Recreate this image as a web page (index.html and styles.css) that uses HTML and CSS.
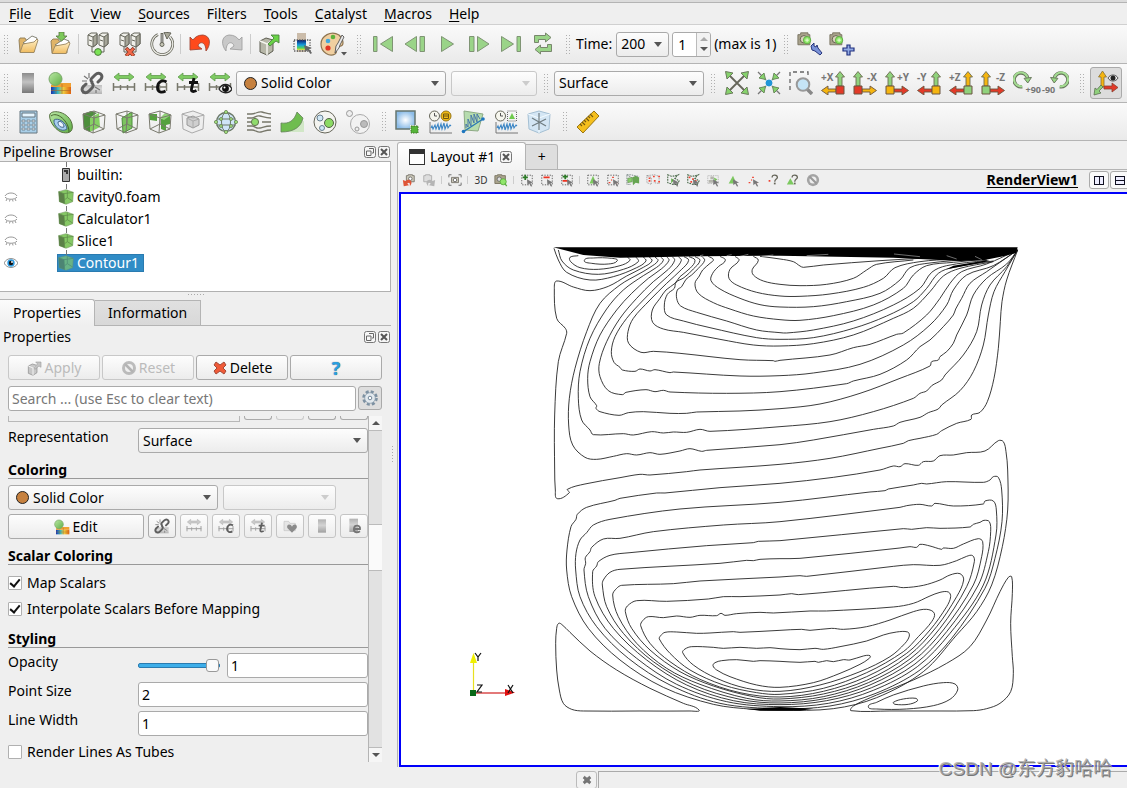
FILE: index.html
```html
<!DOCTYPE html>
<html lang="en">
<head>
<meta charset="utf-8">
<title>ParaView</title>
<link rel="stylesheet" href="styles.css">
</head>
<body>
<svg class="defs" aria-hidden="true">
  <defs>
    <linearGradient id="gGreen" x1="0" y1="0" x2="1" y2="1"><stop offset="0" stop-color="#b9e8a4"/><stop offset="1" stop-color="#5fae45"/></linearGradient>
    <linearGradient id="gGrey" x1="0" y1="0" x2="0" y2="1"><stop offset="0" stop-color="#8c8c8c"/><stop offset=".45" stop-color="#c2c2c2"/><stop offset="1" stop-color="#777"/></linearGradient>
    <linearGradient id="gRainbow"><stop offset="0" stop-color="#2030a8"/><stop offset=".3" stop-color="#20b0d0"/><stop offset=".6" stop-color="#f0d040"/><stop offset="1" stop-color="#e06010"/></linearGradient>
    <linearGradient id="gRainV" x1="0" y1="0" x2="0" y2="1"><stop offset="0" stop-color="#0a1a70"/><stop offset=".5" stop-color="#18a0e0"/><stop offset=".8" stop-color="#50d060"/><stop offset="1" stop-color="#f0e040"/></linearGradient>
    <radialGradient id="gBlue"><stop offset="0" stop-color="#fff"/><stop offset="1" stop-color="#8dbde8"/></radialGradient>
    <linearGradient id="gFolder" x1="0" y1="0" x2="0" y2="1"><stop offset="0" stop-color="#fff0c8"/><stop offset="1" stop-color="#f0bc60"/></linearGradient>
  </defs>
  <symbol id="folder" viewBox="0 0 24 24"><path d="M4 20 3 8l1-2h5l1 2 8 1v11z" fill="#e0b468" stroke="#8d7b55" stroke-width=".9"/><path d="m7 11 9-7 5 2-2 9z" fill="#fff" stroke="#77776a" stroke-width=".9"/><path d="M4 20.500 7 12l11-2 3-3 1 1-4 12.500z" fill="url(#gFolder)" stroke="#9a8660" stroke-width=".9"/></symbol>
  <symbol id="foldersave" viewBox="0 0 24 24"><path d="m4 21-1-12 2-2h5l1 2 8 1v11z" fill="#e0b468" stroke="#8d7b55" stroke-width=".9"/><path d="m7 13 9-6 5 2-2 7z" fill="#fff" stroke="#77776a" stroke-width=".9"/><path d="M4 21.500 7 14l11-2 3-2 1 1-4 10.500z" fill="url(#gFolder)" stroke="#9a8660" stroke-width=".9"/><path d="M11 0h5v4h3l-5.500 5L8 4h3z" fill="#7cc95a" stroke="#55753f" stroke-width=".8"/></symbol>
  <symbol id="servers" viewBox="0 0 24 24"><g stroke="#65655a" stroke-width="1"><path d="m2 3 3-2h6v11l-4 3-5-2z" fill="#f0f0ea"/><path d="m7 5 4-3v10l-4 3z" fill="#a5a598"/><path d="m13 3 3-2h6v11l-4 3-5-2z" fill="#f0f0ea"/><path d="m18 5 4-3v10l-4 3z" fill="#a5a598"/><path d="m2 3 5 2m6-2 5 2M3 8l3 1M14 8l3 1M6 15v5h12v-5" fill="none"/></g></symbol>
  <symbol id="connect" viewBox="0 0 24 24"><use href="#servers"/><circle cx="12" cy="20" r="3.400" fill="#7be356" stroke="#4d7a3c"/></symbol>
  <symbol id="disconnect" viewBox="0 0 24 24"><use href="#servers"/><path d="m8 16 8 8m0-8-8 8" stroke="#863520" stroke-width="3.600"/><path d="m8.500 16.500 7 7m0-7-7 7" stroke="#f4694a" stroke-width="2.200"/></symbol>
  <symbol id="timer" viewBox="0 0 24 24"><path d="M8 2.500A10.500 10.500 0 1 0 20 5M12 1v10" fill="none" stroke="#66665a" stroke-width="2.800"/><path d="M8 2.500A10.500 10.500 0 1 0 20 5" fill="none" stroke="#eeeee8" stroke-width="1.200"/><path d="m14 0 7 1-4 6z" fill="#aaa99a" stroke="#66665a"/><path d="M12 2v10" stroke="#aaa" stroke-width="1.200"/><circle cx="12" cy="12.500" r="2" fill="#c8c8b8" stroke="#66665a"/></symbol>
  <symbol id="undo" viewBox="0 0 24 24"><path d="M2 5v13l12-1-4-3c1-5 8-5 8 5 5-6 5-15-3-16-5 0-8 2-10 5z" fill="#ff4a1c" stroke="#a04838" stroke-width=".9"/></symbol>
  <symbol id="redo" viewBox="0 0 24 24"><path d="M22 5v13l-12-1 4-3c-1-5-8-5-8 5C1 13 1 4 9 3c5 0 8 2 10 5z" fill="#c9c9c9" stroke="#a0a0a0" stroke-width=".9"/></symbol>
  <symbol id="cube" viewBox="0 0 24 24"><path d="m1 4 11-3 11 4-1 14-10 4-10-4z" fill="#86c865" stroke="#6f8f5a" stroke-width=".8"/><path d="m1 4 8 3 1 15-8-3z" fill="#5c8048"/><path d="m1 4 8 3 14-2M9 7l1 15M14 2v11l8 5m-8-5-4 3" fill="none" stroke="#5f8a48" stroke-width="1.100"/></symbol>
  <symbol id="extract" viewBox="0 0 24 24"><path d="m2 9 6-3 7 2v11l-6 4-7-3z" fill="#b7b7a8" stroke="#5c5c50"/><path d="m2 9 7 3 6-4M9 12v11" fill="none" stroke="#f5f5ee" stroke-width="1.500"/><path d="m10 12 6-6-3-3h8v8l-3-2-6 5z" fill="#69d247" stroke="#4d8440" stroke-width=".9"/></symbol>
  <symbol id="selcolor" viewBox="0 0 24 24"><path d="M7 1h9v7H7z" fill="#cbbcaa"/><path d="M7 8h9v10H7z" fill="url(#gRainV)"/><path d="M7 18h9v2H7z" fill="#cbbcaa"/><path d="M4 8h16v11H4z" fill="none" stroke="#555" stroke-width="1.300" stroke-dasharray="1.300 1.300"/><path d="m14 13 8 3-3 1 3 4-1.500 1-3-4-2 2z" fill="#666"/></symbol>
  <symbol id="palette" viewBox="0 0 28 24"><path d="M19 3C11-2 1 4 1 12c0 9 9 13 14 10 4-3-1-5 2-7 3-1 6 0 6-4 0-3-2-6-4-8z" fill="#f0cfa0" stroke="#8d7450" stroke-width="1.200"/><circle cx="8" cy="9" r="2.300" fill="#41a8dc"/><circle cx="13" cy="5" r="2.300" fill="#5db33c"/><circle cx="8" cy="16" r="2.600" fill="#e23524"/><path d="m22 3-4 8-2 3-1 7 4-5 1-3 4-8z" fill="#e8e8e8" stroke="#555" stroke-width=".9"/><path d="M21 20h6l-3 3.500z" fill="#555"/></symbol>
  <symbol id="vfirst" viewBox="0 0 24 24"><g fill="#9ad488" stroke="#7f9474"><path d="M2.500 4.500h3.500v15H2.500zM21.500 4.500v15L9.500 12z"/></g></symbol>
  <symbol id="vprev" viewBox="0 0 24 24"><g fill="#9ad488" stroke="#7f9474"><path d="M17 4.500h4.500v15H17zM13.500 4.500v15L2 12z"/></g></symbol>
  <symbol id="vplay" viewBox="0 0 24 24"><path d="M6.500 4.500v15L18.500 12z" fill="#9ad488" stroke="#7f9474"/></symbol>
  <symbol id="vnext" viewBox="0 0 24 24"><g fill="#9ad488" stroke="#7f9474"><path d="M2.500 4.500H7v15H2.500zM10.500 4.500v15L22 12z"/></g></symbol>
  <symbol id="vlast" viewBox="0 0 24 24"><g fill="#9ad488" stroke="#7f9474"><path d="M18 4.500h3.500v15H18zM2.500 4.500v15L14.500 12z"/></g></symbol>
  <symbol id="loop" viewBox="0 0 24 24"><g fill="#9ad488" stroke="#78876c"><path d="M3.500 10.500v-7h11V1l5.500 4.500L14.500 10V7.500h-7v3zM20.500 12.500v7h-11V22L4 17.500 9.500 13v2.500h7v-3z"/></g></symbol>
  <symbol id="camera" viewBox="0 0 24 24"><path d="M1 4h3V2h8v2h2v11H1z" fill="#a9a38c" stroke="#76715e"/><circle cx="7.500" cy="9" r="4" fill="#d8d2bc" stroke="#5e5a4a"/><circle cx="11" cy="10" r="4" fill="#90e66a" stroke="#5aac3e"/><path d="M9 10h4m-2-2v4" stroke="#eaffdc"/></symbol>
  <symbol id="camcfg" viewBox="0 0 26 26"><use href="#camera" width="22" height="22"/><path d="m14 15 3-3v3l2 1 1-2 1 3 4 5-2 2-5-4-3-1z" fill="#7a92d8" stroke="#27357c"/></symbol>
  <symbol id="camadd" viewBox="0 0 26 26"><use href="#camera" width="22" height="22"/><path d="M18 14h3v3h4v3h-4v4h-3v-4h-4v-3h4z" fill="#93abe4" stroke="#213080" stroke-width="1.200"/></symbol>
  <symbol id="bar" viewBox="0 0 24 24"><path d="M6 2h12v20H6z" fill="url(#gGrey)"/></symbol>
  <symbol id="colormap" viewBox="0 0 24 24"><path d="M3 16h20v7H3z" fill="url(#gRainbow)"/><path d="M23 12v4H3v-2l9-2z" fill="#f0a030"/><path d="M3 19.500h20M8 16v7m6-10v10" stroke="#a86a28" stroke-width=".6"/><circle cx="7.500" cy="8" r="6.500" fill="url(#gGreen)" stroke="#7aa86a"/></symbol>
  <symbol id="chain" viewBox="0 0 24 24"><path d="M2 14h20v9H2z" fill="url(#gGrey)" opacity=".5"/><g fill="none" stroke="#5e5e5e" stroke-width="3" stroke-linecap="round"><path d="M6 13l-3 3c-3 4 2 8 6 4l3-3c2-2 1-4 0-5M18 11l3-3c3-4-2-8-6-4l-3 3c-2 2-1 3 0 4"/></g><path d="m4 5 4 3M9 2v5M2 10h5m8 6 5 3m-4 0v3" stroke="#777" stroke-width="1.200"/></symbol>
  <symbol id="range" viewBox="0 0 24 24"><path d="M1 16h22M1.500 12v8M8.500 14v5M15.500 14v5M22.500 12v8" stroke="#77776b" stroke-width="1.500" fill="none"/><path d="m2 6 5-4v2.500h10V2l5 4-5 4V7.500H7V10z" fill="#7ecb62" stroke="#5f9a4c" stroke-width=".8"/></symbol>
  <symbol id="ranc" viewBox="0 0 24 24"><use href="#range"/><path d="M22.500 11c-5-3-9 1-9 5.500 0 5 4.500 5.500 8 3.500" fill="none" stroke="#111" stroke-width="2.800"/></symbol>
  <symbol id="rant" viewBox="0 0 24 24"><use href="#range"/><path d="m18 7-2.500 11c-.5 3 2 3 5 1.500M13 11.500h9" fill="none" stroke="#111" stroke-width="2.800"/></symbol>
  <symbol id="ranv" viewBox="0 0 24 24"><use href="#range"/><path d="M11 18c3-6 10-6 13 0-3 5-10 5-13 0z" fill="#eee" stroke="#222" stroke-width="1.300"/><circle cx="17.500" cy="17.500" r="3.400" fill="#111"/><circle cx="16.500" cy="16.500" r="1" fill="#fff"/></symbol>
  <symbol id="reset" viewBox="0 0 24 24"><path d="m4 4 16 16m0-16L4 20" stroke="#66665a" stroke-width="1.800"/><g fill="#86d26c" stroke="#6a7b5c"><path d="M.5.5 8 2 2 8zM23.500.5 22 8l-6-6zM.5 23.500 2 16l6 6zM23.500 23.500 16 22l6-6z"/></g></symbol>
  <symbol id="resetd" viewBox="0 0 24 24"><path d="m1 1 22 22m0-22L1 23" stroke="#777" stroke-width="1.300"/><g fill="#86d26c" stroke="#6a8a5c"><path d="M8.500 8.500 2 7l5-5zM15.500 8.500 17 2l5 5zM8.500 15.500 7 22l-5-5zM15.500 15.500 22 17l-5 5z"/></g><circle cx="12" cy="12" r="4" fill="#2196d8" stroke="#eee"/></symbol>
  <symbol id="zoombox" viewBox="0 0 24 24"><path d="M1 19V1h18v6" fill="none" stroke="#666" stroke-width="1.300" stroke-dasharray="4 3"/><path d="m18 18 5 5" stroke="#888" stroke-width="3.500"/><circle cx="14" cy="13.500" r="6.300" fill="#c5e4f6" stroke="#999" stroke-width="2"/></symbol>
  <symbol id="axisl" viewBox="0 0 24 24"><path d="M17 15V6h-2.500L19 .5 23.500 6H21v9z" fill="var(--up)" stroke="#6b6b50" stroke-width=".9"/><path d="M15 18H7v-3L.5 19.500 7 24v-3h8z" fill="var(--side)" stroke="#6b5540" stroke-width=".9"/><path d="M15 15h8v8h-8z" fill="var(--box)" stroke="#6b5540"/></symbol>
  <symbol id="axisr" viewBox="0 0 24 24"><path d="M3 15V6H.5L5 .5 9.500 6H7v9z" fill="var(--up)" stroke="#6b6b50" stroke-width=".9"/><path d="M9 18h8v-3l6.500 4.500L17 24v-3H9z" fill="var(--side)" stroke="#6b5540" stroke-width=".9"/><path d="M1 15h8v8H1z" fill="var(--box)" stroke="#6b5540"/></symbol>
  <symbol id="rot" viewBox="0 0 26 26"><path d="M10 17A7.500 7.500 0 1 1 16 8" fill="none" stroke="#66745a" stroke-width="3.800"/><path d="M10 16.500A7.500 7.500 0 1 1 16 8" fill="none" stroke="#a4dc92" stroke-width="2.200"/><path d="m12 8 8-1-4 6z" fill="#98d884" stroke="#66745a"/></symbol>
  <symbol id="axes" viewBox="0 0 26 26"><path d="M8 17V7H5.500L9.500 1l4 6H11v10z" fill="#f5b510" stroke="#887030" stroke-width=".8"/><path d="M11 16h8v-3l6 4.500-6 4.500v-3h-8z" fill="#e23a28" stroke="#8a4030" stroke-width=".8"/><path d="m8 15 2 2-4 4 2 2-7 2 1-7 2 1.500z" fill="#8fd07c" stroke="#5a7050" stroke-width=".8"/><path d="M15 8c2-4 8-4 10 0-2 4-8 4-10 0z" fill="#eee" stroke="#555"/><circle cx="20" cy="8" r="2.500" fill="#222"/></symbol>
  <symbol id="calc" viewBox="0 0 24 24"><path d="M4 1h17v22H4z" fill="#a9cfe8" stroke="#667680"/><path d="M6 3h13v4H6z" fill="#e5f5ff" stroke="#667680"/><g fill="#e9f1f6" stroke="#6c7c86" stroke-width=".8"><path d="M6 10h3v2H6zM11 10h3v2h-3zM16 10h3v2h-3zM6 14h3v2H6zM11 14h3v2h-3zM16 14h3v2h-3zM6 18h3v2H6zM11 18h3v2h-3zM16 18h3v2h-3z"/></g></symbol>
  <symbol id="contour" viewBox="0 0 24 24"><path d="M1 4c3-5 19-2 22 10 2 9-5 10-11 8C5 19-1 9 1 4z" fill="url(#gGreen)" stroke="#55703e"/><path d="M2 6c6-5 18 5 18 16" fill="none" stroke="#48632f"/><path d="M5 10c4-3 13 3 13 9-5 4-14-2-13-9z" fill="#a6cdf0" stroke="#41678a"/><path d="M9 12c3-2 6 2 6 5-3 1-6-1-6-5z" fill="#ecf5ff" stroke="#41678a"/></symbol>
  <symbol id="wire" viewBox="0 0 24 24"><path d="m1 4 11-3 11 4-1 14-11 4-9-4zM1 4l11 4 11-3M12 8l-1 15M12 1v13L2 19m10-5 10 5" fill="none" stroke="#7a7a6e" stroke-width="1"/></symbol>
  <symbol id="clip" viewBox="0 0 24 24"><path d="m1 4 8-3 6 2-6 4-1 15-6-3z" fill="#4d8f3c"/><path d="m8 8 9-5 1 14-10 5z" fill="#86d163"/><use href="#wire"/></symbol>
  <symbol id="slice" viewBox="0 0 24 24"><path d="m7 8 10-6v16l-9 5z" fill="#7cc45f" stroke="#4d8f3c"/><use href="#wire"/></symbol>
  <symbol id="thresh" viewBox="0 0 24 24"><path d="M1 4h8v7l-7-1zM13 9l9-4v9l-4 1v6l-5-2z" fill="#55a23e"/><path d="m12 8 5-5 6 2-7 5z" fill="#90d477"/><use href="#wire"/></symbol>
  <symbol id="subset" viewBox="0 0 24 24"><path d="m1 4 11-3 11 4-1 14-11 4-9-4z" fill="#eee"/><path d="m6 8 6-2 6 3v6l-6 3-6-3z" fill="#cfcfcf" stroke="#999"/><path d="m6 8 6 3 6-2m-6 2v7M1 4l11 4 11-3M1 4l1 15 9 4 11-4 1-14-11-4z" fill="none" stroke="#aaa"/></symbol>
  <symbol id="glyph" viewBox="0 0 24 24"><circle cx="12" cy="12" r="9.500" fill="#cfe5f7" stroke="#6a7766" stroke-width="1.300"/><ellipse cx="12" cy="12" rx="4.500" ry="9.500" fill="none" stroke="#6a7766"/><path d="M3 9h18M2.500 15h19" stroke="#6a7766"/><g fill="#a3e17c" stroke="#668355" stroke-width=".8"><circle cx="12" cy="2" r="1.600"/><circle cx="2" cy="12" r="1.600"/><circle cx="22" cy="12" r="1.600"/><circle cx="12" cy="22" r="1.600"/><circle cx="7" cy="9" r="1.500"/><circle cx="17" cy="9" r="1.500"/><circle cx="7" cy="16" r="1.500"/><circle cx="17" cy="16" r="1.500"/></g></symbol>
  <symbol id="stream" viewBox="0 0 24 24"><path d="M0 4h4c5 0 7-3 11-2s5 2 9 2M0 8h5c3 0 4-3 8-2s6 2 11 2M0 16h5c3 0 4 3 8 2s6-2 11-2M0 20h5c4 0 5 3 9 2s5-2 10-2M15 12h9M0 12h4" fill="none" stroke="#77776a" stroke-width="1.300"/><circle cx="8" cy="12" r="3.600" fill="#8fdb6c" stroke="#62754f"/></symbol>
  <symbol id="warp" viewBox="0 0 24 24"><path d="m12 14 12-3v11H2z" fill="#d1e7c7"/><path d="M1 13c8 1 13-2 16-11l6 6c-2 9-9 14-22 14z" fill="#6fbd4f" stroke="#64805a" stroke-width=".8"/></symbol>
  <symbol id="group" viewBox="0 0 24 24"><circle cx="12" cy="12" r="11" fill="#f4f4f0" stroke="#66665a"/><circle cx="7" cy="8" r="3" fill="#cfe7f5" stroke="#6a8090"/><circle cx="16" cy="13" r="4.500" fill="#8bda63" stroke="#526345"/><circle cx="9" cy="18" r="2.500" fill="#cfe7f5" stroke="#6a8090"/></symbol>
  <symbol id="ungroup" viewBox="0 0 24 24"><circle cx="14" cy="14" r="9.500" fill="#f2f2f2" stroke="#aaa"/><circle cx="3.500" cy="3.500" r="3" fill="#eee" stroke="#999"/><circle cx="18" cy="14" r="3.500" fill="#bbb" stroke="#999"/><circle cx="11" cy="19" r="2" fill="#eee" stroke="#999"/></symbol>
  <symbol id="extractsel" viewBox="0 0 24 24"><path d="M1 1h19v18H1z" fill="url(#gBlue)" stroke="#66766f" stroke-width="1.500"/><path d="M15 15h9v9h-9z" fill="#eee"/><path d="M16 16h7v7h-7z" fill="#56b53a" stroke="#3c7428" stroke-dasharray="1.500 1"/></symbol>
  <symbol id="wave" viewBox="0 0 24 24"><path d="M2 12v11h22" fill="none" stroke="#777"/><path d="m3 18 1-2 1 3 2-4 1 4 2-5 1 6 2-6 1 5 2-6 1 6 2-5 1 4 2-3 1 1" fill="none" stroke="#3984c4" stroke-width="1.100"/></symbol>
  <symbol id="plott" viewBox="0 0 24 24"><use href="#wave"/><circle cx="6.500" cy="6" r="5" fill="#f6f6ee" stroke="#66665a"/><path d="M6.500 3v3H9" fill="none" stroke="#555"/><circle cx="18" cy="6" r="5" fill="#f1bb14" stroke="#977515"/><path d="M15.500 4h5v4.500h-5zm0 2h5" fill="none" stroke="#715610"/></symbol>
  <symbol id="plotl" viewBox="0 0 24 24"><path d="m3 1 19 3-5 17-13-1z" fill="#b6dcae" stroke="#8eaa85"/><path d="m2 22 20-13" stroke="#2877b5" stroke-width="1.300"/><path d="m5 18 0-4 2 3V9l3 7V5l3 8V4l3 8V4l3 5" fill="none" stroke="#4877a8"/><circle cx="2.500" cy="21.500" r="1.800" fill="#1e77bf"/><circle cx="22" cy="9" r="1.800" fill="#1e77bf"/></symbol>
  <symbol id="plots" viewBox="0 0 24 24"><use href="#wave"/><circle cx="6.500" cy="6" r="5" fill="#f6f6ee" stroke="#66665a"/><path d="M6.500 3v3H9" fill="none" stroke="#555"/><path d="M13.500 1h9v10h-9z" fill="none" stroke="#666" stroke-dasharray="1 1"/><path d="m18 3 3 6h-6z" fill="#6fca4e"/></symbol>
  <symbol id="probe" viewBox="0 0 24 24"><path d="m1 4 11-3 11 3-1 15-10 4-10-4z" fill="#d4e6f4" stroke="#a4bfd3"/><path d="m1 4 11 4 11-4M12 8v15" fill="none" stroke="#f3fbff"/><path d="M12 3v17M5 8l14 8M5 16l14-7" stroke="#6f7c80" stroke-width="1.200"/></symbol>
  <symbol id="ruler" viewBox="0 0 24 24"><path d="M1 17 18 1l5 5L7 23z" fill="#f5bf1d" stroke="#9a7510"/><path d="m4 14 2 2m0-4 3 3m-1-5 2 2m0-4 3 3m-1-5 2 2m0-4 3 3" stroke="#765a10" stroke-width="1.100"/></symbol>
  <symbol id="restore" viewBox="0 0 12 12"><rect x=".5" y=".5" width="11" height="11" rx="2" fill="#f6f6f6" stroke="#777"/><path d="M5 2.500h4.500V7H8M2.500 5H7v4.500H2.500z" fill="none" stroke="#666"/></symbol>
  <symbol id="close" viewBox="0 0 12 12"><rect x=".5" y=".5" width="11" height="11" rx="2" fill="#f6f6f6" stroke="#777"/><path d="m3 3 6 6m0-6L3 9" stroke="#555" stroke-width="2"/></symbol>
  <symbol id="server" viewBox="0 0 16 16"><path d="M4.500 1.500h7v13h-7z" fill="#aaa" stroke="#333"/><path d="M6 4h4M8 6h2" stroke="#111" stroke-width="1.500"/></symbol>
  <symbol id="shut" viewBox="0 0 14 10"><path d="M1 4c2-4 10-4 12 0M1 5c2 3 10 3 12 0M3 7 2 9m4-1.500L5.500 9.500M8.500 7.500l.5 2M11 7l1 2" fill="none" stroke="#999"/></symbol>
  <symbol id="eye" viewBox="0 0 14 10"><path d="M0 5c3-6 11-6 14 0-3 6-11 6-14 0z" fill="#fff" stroke="#777" stroke-width=".8"/><circle cx="7" cy="5" r="3.700" fill="#2d9be0"/><circle cx="7" cy="5" r="2.200" fill="#111"/><circle cx="8" cy="4" r=".9" fill="#fff"/></symbol>
  <symbol id="no" viewBox="0 0 16 16"><circle cx="8" cy="8" r="7" fill="#a4a4a4"/><circle cx="8" cy="8" r="4" fill="#eee"/><path d="m4 4 8 8" stroke="#999" stroke-width="2.500"/></symbol>
  <symbol id="cross" viewBox="0 0 16 16"><path d="m4 2 4 3 4-3 2 3-3 3 3 3-2 3-4-3-4 3-2-3 3-3-3-3z" fill="#f05a38" stroke="#a24a38"/></symbol>
  <symbol id="gear" viewBox="0 0 16 16"><circle cx="8" cy="8" r="6.300" fill="none" stroke="#7d91a2" stroke-width="3" stroke-dasharray="2.900 2.040"/><circle cx="8" cy="8" r="5.300" fill="#e2e9ee" stroke="#8297a8" stroke-width=".7"/><circle cx="8" cy="8" r="1.800" fill="#fff" stroke="#72879a"/></symbol>
  <symbol id="heart" viewBox="0 0 24 24"><path d="M3 19V5h7l2 3h8v11z" fill="#ddd" stroke="#aaa"/><path d="m15 22-7-7c-2-6 5-7 7-2 2-5 9-4 7 2z" fill="#555"/></symbol>
  <symbol id="bare" viewBox="0 0 24 24"><path d="M5 1h13v20H5z" fill="url(#gGrey)"/><path d="M12 16.500h9c1-6-8-7-9-1-1 7 5 7 9 4.500" fill="none" stroke="#333" stroke-width="2.800"/></symbol>
  <symbol id="cam" viewBox="0 0 16 16"><path d="M5 3h2V2h5v1h2v7H5z" fill="#ccc9ba" stroke="#77736a"/><circle cx="9.500" cy="6.500" r="2" fill="#fff" stroke="#666"/></symbol>
  <symbol id="camundo" viewBox="0 0 16 16"><use href="#cam"/><path d="m1 8 1 7 6-1-2-2c3-2 3 0 3 3 4-4 1-8-3-7L4 9z" fill="#df5537"/></symbol>
  <symbol id="camredo" viewBox="0 0 16 16"><path d="M2 3h2V2h5v1h2v7H2z" fill="#ddd" stroke="#aaa"/><path d="m15 8-1 7-6-1 2-2c-3-2-3 0-3 3-4-4-1-8 3-7l2 1z" fill="#b5b5b5"/></symbol>
  <symbol id="camshot" viewBox="0 0 16 16"><path d="M1 5V2h3m8 0h3v3m0 6v3h-3m-8 0H1v-3" fill="none" stroke="#666"/><path d="M4 5h8v6H4z" fill="#ccc9ba" stroke="#77736a"/><circle cx="8" cy="8" r="2" fill="#fff" stroke="#666"/></symbol>
  <symbol id="camzoom" viewBox="0 0 16 16"><path d="M1 3h3V2h5v1h4v9H1z" fill="#a9a38c" stroke="#76715e"/><circle cx="6" cy="7" r="2.500" fill="#ddd" stroke="#666"/><circle cx="10.500" cy="10" r="3.500" fill="#90e66a" stroke="#5aac3e"/><path d="m12.500 12 2 3" stroke="#5aac3e" stroke-width="1.500"/></symbol>
  <symbol id="dots" viewBox="0 0 16 16"><path d="M2 2.500h12v11H2z" fill="none" stroke="#555" stroke-dasharray="1.500 1.500"/></symbol>
  <symbol id="ptr" viewBox="0 0 16 16"><path d="m8 7 7 4-3 .5 2 3.500-1.500.5-2-3.500-2 2z" fill="#777"/></symbol>
  <symbol id="sadd" viewBox="0 0 16 16"><use href="#dots"/><path d="M3 5h6M6 2v6" stroke="#2b7a25" stroke-width="2"/><use href="#ptr"/></symbol>
  <symbol id="ssub" viewBox="0 0 16 16"><use href="#dots"/><path d="M4 5h7" stroke="#e32" stroke-width="2"/><use href="#ptr"/></symbol>
  <symbol id="stog" viewBox="0 0 16 16"><use href="#dots"/><path d="M3 4h6M6 2v5" stroke="#2b7a25" stroke-width="2"/><path d="M3 9h7" stroke="#e32" stroke-width="2"/><use href="#ptr"/></symbol>
  <symbol id="stri" viewBox="0 0 16 16"><use href="#dots"/><path d="m8 3 4 9H4z" fill="#7cc95f"/><use href="#ptr"/></symbol>
  <symbol id="rpt" viewBox="0 0 16 16"><path d="M3 11h2M7 5h2M11 11h2M6 8h1" stroke="#e43" stroke-width="1.600"/></symbol>
  <symbol id="spt" viewBox="0 0 16 16"><use href="#dots"/><use href="#rpt"/><use href="#ptr"/></symbol>
  <symbol id="fcell" viewBox="0 0 16 16"><path d="m7 5 4-2 4 2v7l-4-1-3 3z" fill="#67a552"/><path d="M1 2h4m0 11H1V2l5 3M5 2l10 2" fill="none" stroke="#566" stroke-dasharray="1 1"/><path d="m2 6 5-1v5l-5 1z" fill="#88cf6b" stroke="#587a4a" stroke-width=".6"/></symbol>
  <symbol id="fpt" viewBox="0 0 16 16"><path d="m1 3 5 2v8l-5-2zM1 3l9-1 5 2v8l-6-1" fill="none" stroke="#888" stroke-dasharray="1 1"/><path d="M3 6h2m3-2h2M3 9h2m4 0h2m3-5h2m-2 6h2" stroke="#e43" stroke-width="1.800"/></symbol>
  <symbol id="poly" viewBox="0 0 16 16"><path d="m2 2 5 2 7-2-4 4 5 3-2 4-5 0-6-2z" fill="none" stroke="#456545" stroke-width="1.200" stroke-dasharray="2 1"/></symbol>
  <symbol id="pcell" viewBox="0 0 16 16"><use href="#poly"/><path d="m6 6 3 2-3 4z" fill="#59a841"/><use href="#ptr"/></symbol>
  <symbol id="ppt" viewBox="0 0 16 16"><use href="#poly"/><path d="M3 5h2m2 2h2M5 10h2m3-1h2" stroke="#e43" stroke-width="2"/><use href="#ptr"/></symbol>
  <symbol id="block" viewBox="0 0 16 16"><path d="M2 3h12v9H2z" fill="none" stroke="#aaa" stroke-dasharray="1 1"/><path d="M3 8h5v3H3zM5 4h4v3H5z" fill="#b4b4ac"/><path d="m9 5 4 2-3 3z" fill="#7bc35f"/><use href="#ptr"/></symbol>
  <symbol id="itri" viewBox="0 0 16 16"><path d="m8 3 4 9H3z" fill="#7cc95f"/><use href="#ptr"/></symbol>
  <symbol id="ipt" viewBox="0 0 16 16"><use href="#rpt"/><use href="#ptr"/></symbol>
  <symbol id="quest" viewBox="0 0 16 16"><path d="M7 5c0-4 6-3 6 0 0 2-3 2-3 5" fill="none" stroke="#66665a" stroke-width="1.500"/><path d="M9 12h2" stroke="#66665a" stroke-width="2"/></symbol>
  <symbol id="qpt" viewBox="0 0 16 16"><use href="#quest"/><path d="M3 9h2" stroke="#e43" stroke-width="2"/></symbol>
  <symbol id="qtri" viewBox="0 0 16 16"><use href="#quest"/><path d="m5 6 4 7H1z" fill="#7cc95f"/></symbol>
</svg>

<div class="app">
  <nav class="menubar">
    <button><u>F</u>ile</button><button><u>E</u>dit</button><button><u>V</u>iew</button><button><u>S</u>ources</button><button>Fi<u>l</u>ters</button><button><u>T</u>ools</button><button><u>C</u>atalyst</button><button><u>M</u>acros</button><button><u>H</u>elp</button>
  </nav>

  <div class="toolbar">
    <span class="grip first"></span>
    <button class="tb" aria-label="Open"><svg><use href="#folder"/></svg></button>
    <button class="tb" aria-label="Save Data"><svg><use href="#foldersave"/></svg></button>
    <span class="sep"></span>
    <button class="tb" aria-label="Connect"><svg><use href="#connect"/></svg></button>
    <button class="tb" aria-label="Disconnect"><svg><use href="#disconnect"/></svg></button>
    <button class="tb" aria-label="Auto Apply"><svg><use href="#timer"/></svg></button>
    <span class="sep"></span>
    <button class="tb" aria-label="Undo"><svg><use href="#undo"/></svg></button>
    <button class="tb" aria-label="Redo" disabled><svg><use href="#redo"/></svg></button>
    <span class="sep"></span>
    <button class="tb" aria-label="Extract"><svg><use href="#extract"/></svg></button>
    <button class="tb" aria-label="Find Data"><svg><use href="#selcolor"/></svg></button>
    <button class="tb" aria-label="Load Palette"><svg class="wide"><use href="#palette"/></svg></button>
    <span class="grip"></span>
    <button class="tb" aria-label="First Frame"><svg><use href="#vfirst"/></svg></button>
    <button class="tb" aria-label="Previous Frame"><svg><use href="#vprev"/></svg></button>
    <button class="tb" aria-label="Play"><svg><use href="#vplay"/></svg></button>
    <button class="tb" aria-label="Next Frame"><svg><use href="#vnext"/></svg></button>
    <button class="tb" aria-label="Last Frame"><svg><use href="#vlast"/></svg></button>
    <button class="tb" aria-label="Loop"><svg><use href="#loop"/></svg></button>
    <span class="grip"></span>
    <label class="time" for="time">Time:</label>
    <span class="combo w-time"><select id="time"><option>200</option></select></span>
    <span class="spin"><input aria-label="Time step" type="text" value="1"><span class="arrows"><i class="up"></i><i class="down"></i></span></span>
    <span class="max">(max is 1)</span>
    <span class="grip"></span>
    <button class="tb" aria-label="Configure Camera Link"><svg class="big"><use href="#camcfg"/></svg></button>
    <button class="tb" aria-label="Add Camera Link"><svg class="big"><use href="#camadd"/></svg></button>
  </div>

  <div class="toolbar">
    <span class="grip first"></span>
    <button class="tb" aria-label="Color Legend"><svg><use href="#bar"/></svg></button>
    <button class="tb" aria-label="Edit Color Map"><svg><use href="#colormap"/></svg></button>
    <button class="tb" aria-label="Separate Color Map"><svg><use href="#chain"/></svg></button>
    <button class="tb" aria-label="Rescale to Data Range"><svg><use href="#range"/></svg></button>
    <button class="tb" aria-label="Rescale to Custom Range"><svg><use href="#ranc"/></svg></button>
    <button class="tb" aria-label="Rescale over Time"><svg><use href="#rant"/></svg></button>
    <button class="tb" aria-label="Rescale to Visible"><svg><use href="#ranv"/></svg></button>
    <span class="combo dot w-color"><select aria-label="Color by"><option>Solid Color</option></select></span>
    <span class="combo off w-comp"><select aria-label="Component" disabled><option></option></select></span>
    <span class="grip"></span>
    <span class="combo w-rep"><select aria-label="Representation"><option>Surface</option></select></span>
    <span class="grip"></span>
    <button class="tb" aria-label="Reset"><svg><use href="#reset"/></svg></button>
    <button class="tb" aria-label="Zoom to Data"><svg><use href="#resetd"/></svg></button>
    <button class="tb" aria-label="Zoom to Box"><svg><use href="#zoombox"/></svg></button>
    <button class="tb ax px"><svg><use href="#axisl"/></svg><b>+X</b></button>
    <button class="tb ax px right"><svg><use href="#axisr"/></svg><b>-X</b></button>
    <button class="tb ax py right"><svg><use href="#axisr"/></svg><b>+Y</b></button>
    <button class="tb ax py"><svg><use href="#axisl"/></svg><b>-Y</b></button>
    <button class="tb ax pz"><svg><use href="#axisl"/></svg><b>+Z</b></button>
    <button class="tb ax pz right"><svg><use href="#axisr"/></svg><b>-Z</b></button>
    <button class="tb rot"><svg><use href="#rot"/></svg><b>+90</b></button>
    <button class="tb rot back"><svg><use href="#rot"/></svg><b>-90</b></button>
    <span class="grip"></span>
    <button class="tb pressed" aria-label="Show Orientation Axes"><svg class="big"><use href="#axes"/></svg></button>
  </div>

  <div class="toolbar filters">
    <span class="grip first"></span>
    <button class="tb" aria-label="Calculator"><svg><use href="#calc"/></svg></button>
    <button class="tb" aria-label="Contour"><svg><use href="#contour"/></svg></button>
    <button class="tb" aria-label="Clip"><svg><use href="#clip"/></svg></button>
    <button class="tb" aria-label="Slice"><svg><use href="#slice"/></svg></button>
    <button class="tb" aria-label="Threshold"><svg><use href="#thresh"/></svg></button>
    <button class="tb" aria-label="Extract Subset" disabled><svg><use href="#subset"/></svg></button>
    <button class="tb" aria-label="Glyph"><svg><use href="#glyph"/></svg></button>
    <button class="tb" aria-label="Stream Tracer"><svg><use href="#stream"/></svg></button>
    <button class="tb" aria-label="Warp"><svg><use href="#warp"/></svg></button>
    <button class="tb" aria-label="Group"><svg><use href="#group"/></svg></button>
    <button class="tb" aria-label="Extract Group" disabled><svg><use href="#ungroup"/></svg></button>
    <span class="grip"></span>
    <button class="tb" aria-label="Extract Selection"><svg><use href="#extractsel"/></svg></button>
    <button class="tb" aria-label="Plot Data over Time"><svg><use href="#plott"/></svg></button>
    <button class="tb" aria-label="Plot over Line"><svg><use href="#plotl"/></svg></button>
    <button class="tb" aria-label="Plot Selection over Time"><svg><use href="#plots"/></svg></button>
    <button class="tb" aria-label="Probe"><svg><use href="#probe"/></svg></button>
    <span class="grip"></span>
    <button class="tb" aria-label="Ruler"><svg><use href="#ruler"/></svg></button>
  </div>

  <main class="main">
    <aside class="dock">
      <header class="title">Pipeline Browser<span class="tools"><button aria-label="Float"><svg><use href="#restore"/></svg></button><button aria-label="Close"><svg><use href="#close"/></svg></button></span></header>
      <ul class="tree">
        <li><span class="vis"></span><span class="node"><svg><use href="#server"/></svg>builtin:</span></li>
        <li><span class="vis"><svg><use href="#shut"/></svg></span><span class="node"><svg><use href="#cube"/></svg>cavity0.foam</span></li>
        <li><span class="vis"><svg><use href="#shut"/></svg></span><span class="node"><svg><use href="#cube"/></svg>Calculator1</span></li>
        <li><span class="vis"><svg><use href="#shut"/></svg></span><span class="node"><svg><use href="#cube"/></svg>Slice1</span></li>
        <li><span class="vis"><svg><use href="#eye"/></svg></span><span class="node sel"><svg><use href="#cube"/></svg>Contour1</span></li>
      </ul>
      <div class="hsplit"></div>
      <div class="tabs"><button class="tab on">Properties</button><button class="tab">Information</button></div>
      <header class="title">Properties<span class="tools"><button aria-label="Float"><svg><use href="#restore"/></svg></button><button aria-label="Close"><svg><use href="#close"/></svg></button></span></header>
      <div class="actions">
        <button class="btn" disabled><svg class="gray"><use href="#extract"/></svg>Apply</button>
        <button class="btn" disabled><svg><use href="#no"/></svg>Reset</button>
        <button class="btn"><svg><use href="#cross"/></svg>Delete</button>
        <button class="btn help">?</button>
      </div>
      <div class="search"><input type="text" aria-label="Search" placeholder="Search ... (use Esc to clear text)"><button class="btn gear" aria-label="Advanced"><svg><use href="#gear"/></svg></button></div>
      <div class="scroller">
        <div class="props">
          <div class="cut"><i class="box"></i><i></i><i class="dim"></i><i></i><i></i></div>
          <div class="row"><label for="rep">Representation</label><span class="combo"><select id="rep"><option>Surface</option></select></span></div>
          <h3>Coloring</h3>
          <div class="pair"><span class="combo dot"><select aria-label="Coloring"><option>Solid Color</option></select></span><span class="combo off"><select aria-label="Coloring component" disabled><option></option></select></span></div>
          <div class="edit">
            <button class="btn"><svg><use href="#colormap"/></svg>Edit</button>
            <button class="btn sm" aria-label="Separate"><svg class="gray"><use href="#chain"/></svg></button>
            <button class="btn sm off" aria-label="Rescale"><svg><use href="#range"/></svg></button>
            <button class="btn sm off" aria-label="Rescale custom"><svg><use href="#ranc"/></svg></button>
            <button class="btn sm off" aria-label="Rescale time"><svg><use href="#rant"/></svg></button>
            <button class="btn sm off" aria-label="Presets"><svg><use href="#heart"/></svg></button>
            <button class="btn sm off" aria-label="Legend"><svg><use href="#bar"/></svg></button>
            <button class="btn sm off" aria-label="Edit legend"><svg><use href="#bare"/></svg></button>
          </div>
          <h3>Scalar Coloring</h3>
          <div class="checks">
            <label><input type="checkbox" checked>Map Scalars</label>
            <label><input type="checkbox" checked>Interpolate Scalars Before Mapping</label>
          </div>
          <h3>Styling</h3>
          <div class="fields">
            <div class="row"><label for="op">Opacity</label><span class="opac"><input type="range" aria-label="Opacity slider" value="100"><input id="op" type="text" value="1"></span></div>
            <div class="row"><label for="ps">Point Size</label><input id="ps" type="text" value="2"></div>
            <div class="row"><label for="lw">Line Width</label><input id="lw" type="text" value="1"></div>
          </div>
          <div class="checks last"><label><input type="checkbox">Render Lines As Tubes</label></div>
        </div>
        <div class="sbar"><span class="cap"><i class="up"></i></span><span class="track"></span><span class="thumb"></span><span class="track low"></span><span class="cap"><i class="down"></i></span></div>
      </div>
    </aside>
    <div class="vsplit"></div>
    <section class="views">
      <div class="ltabs"><button class="ltab on"><i class="win"></i>Layout #1<svg><use href="#close"/></svg></button><button class="ltab plus">+</button><span class="rest"></span></div>
      <div class="pane">
        <div class="vbar">
          <button aria-label="Camera Undo"><svg><use href="#camundo"/></svg></button><button aria-label="Camera Redo"><svg><use href="#camredo"/></svg></button><span class="sep"></span>
          <button aria-label="Capture"><svg><use href="#camshot"/></svg></button><span class="sep"></span>
          <button class="td">3D</button><button aria-label="Adjust Camera"><svg><use href="#camzoom"/></svg></button><span class="sep"></span>
          <button aria-label="Add selection"><svg><use href="#sadd"/></svg></button><button aria-label="Subtract selection"><svg><use href="#ssub"/></svg></button><button aria-label="Toggle selection"><svg><use href="#stog"/></svg></button><span class="sep"></span>
          <button aria-label="Select Cells On"><svg><use href="#stri"/></svg></button><button aria-label="Select Points On"><svg><use href="#spt"/></svg></button><button aria-label="Select Cells Through"><svg><use href="#fcell"/></svg></button><button aria-label="Select Points Through"><svg><use href="#fpt"/></svg></button><button aria-label="Polygon Cells"><svg><use href="#pcell"/></svg></button><button aria-label="Polygon Points"><svg><use href="#ppt"/></svg></button><button aria-label="Select Block"><svg><use href="#block"/></svg></button><button aria-label="Interactive Cells"><svg><use href="#itri"/></svg></button><button aria-label="Interactive Points"><svg><use href="#ipt"/></svg></button><button aria-label="Hover Points"><svg><use href="#qpt"/></svg></button><button aria-label="Hover Cells"><svg><use href="#qtri"/></svg></button><button aria-label="Clear Selection"><svg><use href="#no"/></svg></button>
          <span class="vname"><a href="#view">RenderView1</a></span>
          <button class="split" aria-label="Split Horizontal"><i class="h"></i></button><button class="split" aria-label="Split Vertical"><i class="v"></i></button>
        </div>
        <div class="canvas" id="view">
          <svg viewBox="0 0 726 571" preserveAspectRatio="xMinYMin meet">
            <g id="contours" transform="translate(139 41) scale(.33333)"></g>
            <g stroke-width="1.200">
              <path d="M72.500 499v-38" stroke="#e8e020"/><path d="m72.500 459-3.500 10h7z" fill="#f0f000"/>
              <path d="M75 499h32" stroke="#d02020"/><path d="m114 498.500-10-3.500v7z" fill="#e01010"/>
              <path d="M69 496h6v6h-6z" fill="#086818"/>
              <g fill="none" stroke="#111"><path d="m74 459 3 4 3-4m-3 4v4M76 491h5l-5 7h5M107 491l5 8m0-8-5 8"/></g>
            </g>
          </svg>
        </div>
      </div>
    </section>
  </main>
  <footer class="status"><button aria-label="Abort"><svg><use href="#cross"/></svg></button><span class="progress"></span></footer>
  <div class="mark">CSDN @东方豹哈哈</div>
</div>
<script src="contours.js"></script>
</body>
</html>
```
FILE: styles.css
```css
*, *::before, *::after { box-sizing: border-box; }
body { margin: 0; background: #efefef; color: #000; font: 14px/18px "Noto Sans", "Open Sans", sans-serif; }
button, input, select { font: inherit; color: inherit; margin: 0; }
button { border: 0; background: none; padding: 0; }
.defs { position: absolute; width: 0; height: 0; }
.app { position: relative; height: 100vh; min-height: 620px; display: flex; flex-direction: column; overflow: hidden; }

.menubar { height: 25px; border-top: 2px solid #dcdcdc; box-shadow: inset 0 1px #b4b4b4; border-bottom: 1px solid #d0d0d0; display: flex; align-items: center; gap: 17px; padding: 2px 9px 0; flex: none; }
.menubar u, .vname a { text-underline-offset: 2px; }

.toolbar { height: 39px; flex: none; display: flex; align-items: center; background: linear-gradient(#fafafa, #eaeaea); border-bottom: 1px solid #b4b4b4; white-space: nowrap; }
.grip { width: 17px; height: 19px; flex: none; padding: 0 5px 0 7px; background: linear-gradient(#bbb, #bbb) 0 0 / 1px 1px content-box; }
.grip { background: conic-gradient(from 270deg at 1px 1px, #b0b0b0 90deg, transparent 0) 0 0 / 3px 3px content-box content-box; }
.grip.first { width: 12px; padding: 0 3px 0 4px; }
.sep { width: 6px; height: 20px; flex: none; border-left: 1px solid #ccc; margin-left: 2px; margin-right: -2px; }
.tb { width: 32px; height: 32px; flex: none; display: grid; place-items: center; }
.tb svg { width: 24px; height: 24px; }
.tb svg.wide { width: 28px; }
.tb svg.big { width: 26px; height: 26px; }
.filters { height: 38px; }
.filters .tb { width: 33px; }
.filters .grip.first { width: 11px; padding: 0 2px 0 4px; }
.filters .grip { width: 16px; padding: 0 3px 0 8px; }
.tb.pressed { border: 1px solid #aaa; border-radius: 3px; background: #dcdcdc; }
.ax, .rot { position: relative; }
.tb b { position: absolute; left: 4px; top: 3px; font-size: 10px; line-height: 14px; color: #777; }
.tb.right b { left: auto; right: 4px; }
.px { --up: #90d27c; --side: #f5b510; --box: #e23a28; }
.py { --up: #90d27c; --side: #e23a28; --box: #f5b510; }
.pz { --up: #f5b510; --side: #e23a28; --box: #90d27c; }
.tb.rot b { left: auto; right: 0; top: 16px; font-size: 9px; }
.tb.rot.back b { right: auto; left: 1px; }
.rot.back svg { transform: scaleX(-1); }
.time { margin-right: 4px; }
.max { margin-left: 3px; }
.w-time { width: 53px; margin-right: 3px; }
.w-color { width: 210px; margin-right: 5px; }
.w-comp { width: 86px; }
.w-rep { width: 150px; }

.combo { position: relative; display: block; height: 25px; }
.combo select { appearance: none; width: 100%; height: 25px; padding: 0 20px 0 4px; border: 1px solid #aaa; border-radius: 3px; background: linear-gradient(#fdfdfd, #ececec); line-height: 20px; }
.combo::after { content: ""; position: absolute; right: 7px; top: 10px; border: 4px solid transparent; border-top: 5px solid #555; border-bottom: 0; pointer-events: none; }
.combo.off::after { border-top-color: #ccc; }
.combo.off select { border-color: #c8c8c8; opacity: 1; }
.combo.dot select { padding-left: 24px; }
.combo.dot::before { content: ""; position: absolute; left: 8px; top: 6px; width: 13px; height: 13px; border: 1px solid #222; border-radius: 50%; background: #c6813f; }
input[type=text] { height: 25px; min-width: 0; padding: 0 3px; border: 1px solid #aaa; border-radius: 3px; background: #fff; }
input::placeholder { color: #777; opacity: 1; }
.spin { display: flex; width: 39px; height: 25px; border: 1px solid #aaa; border-radius: 3px; background: #fff; overflow: hidden; }
.spin input[type=text] { flex: 1; border: 0; height: 23px; padding: 0 5px; }
.arrows { width: 14px; border-left: 1px solid #bbb; background: #f2f2f2; display: flex; flex-direction: column; align-items: center; justify-content: center; gap: 6px; }
.up, .down { width: 0; height: 0; border: 4px solid transparent; }
.up { border-top: 0; border-bottom: 4px solid #555; }
.down { border-bottom: 0; border-top: 4px solid #555; }
.spin .up { border-bottom-color: #aaa; }

.main { flex: 1; min-height: 0; display: grid; grid-template-columns: 391px 6px minmax(0, 1fr); }
.dock { display: flex; flex-direction: column; min-height: 0; padding-bottom: 5px; }
.title { flex: none; height: 20px; display: flex; align-items: center; padding: 2px 1px 0 3px; }
.tools { margin-left: auto; display: flex; gap: 2px; }
.tools button, .tools svg { display: block; width: 12px; height: 12px; }
.tree { flex: none; height: 131px; list-style: none; margin: 0; padding: 2px 0 0; background: #fff; border: 1px solid #b0b0b0; border-left: 0; }
.tree li { display: flex; height: 22px; align-items: center; }
.vis { width: 57px; padding-left: 4px; }
.vis svg { display: block; width: 14px; height: 10px; }
.node { position: relative; display: flex; align-items: center; height: 18px; padding: 0 5px 0 1px; gap: 3px; }
.node::before { content: ""; position: absolute; left: 9px; top: -4px; height: 5px; border-left: 1px solid #777; }
.node svg { width: 16px; height: 16px; }
.node.sel { background: #308cc6; outline: 1px solid #2a7bb0; outline-offset: -1px; color: #fff; }
.node.sel svg { opacity: .65; }
.hsplit { flex: none; height: 7px; margin: 0 187px; background: radial-gradient(circle, #aaa 1px, transparent 1px) 0 1px / 3px 3px repeat-x; }
.tabs { flex: none; height: 27px; display: flex; align-items: flex-end; box-shadow: inset 0 -1px #b4b4b4; }
.tab { height: 26px; padding: 0 13px; border: 1px solid #b4b4b4; border-left: 0; background: linear-gradient(#e0e0e0, #d8d8d8); }
.tab.on { height: 27px; border-bottom: 0; border-radius: 0 3px 0 0; background: linear-gradient(#fcfcfc, #efefef); }
.actions { flex: none; display: grid; grid-template-columns: repeat(4, 1fr); gap: 2px; padding: 9px 9px 6px 8px; }
.btn { height: 25px; border: 1px solid #aaa; border-radius: 3px; background: linear-gradient(#fdfdfd, #ececec); display: flex; align-items: center; justify-content: center; gap: 2px; }
.btn svg { width: 16px; height: 16px; }
.btn:disabled { color: #bbb; border-color: #c8c8c8; }
.btn:disabled svg { opacity: .7; }
.gray { filter: grayscale(1); }
.help { color: #2a9fe0; font-weight: 700; font-size: 18px; text-shadow: 0 0 1px #555; }
.search { flex: none; display: flex; gap: 2px; padding: 0 9px 5px 8px; }
.search input { flex: 1; }
.btn.gear { width: 24px; height: 24px; background: #dedede; }
.scroller { flex: 1; min-height: 0; display: flex; padding: 0 9px 0 8px; }
.props { flex: 1; min-width: 0; overflow: hidden; }
.cut { display: flex; gap: 4px; height: 6px; margin-bottom: 6px; }
.cut i { flex: none; width: 28px; height: 4px; border: 1px solid #aaa; border-top: 0; border-radius: 0 0 3px 3px; }
.cut .box { width: 232px; height: 6px; border-radius: 0; border-color: #b8b8b8; }
.cut .dim { border-color: #ccc; }
.row { display: grid; grid-template-columns: 130px minmax(0, 1fr); align-items: start; }
h3 { margin: 4px 0 0; height: 22px; font-size: 14px; line-height: 18px; font-weight: 700; border-bottom: 1px solid #999; padding-top: 4px; }
.pair { display: grid; grid-template-columns: 210px 113px; gap: 5px; margin: 6px 0 4px; }
.edit { display: flex; gap: 4px; }
.edit .btn { flex: none; width: 136px; }
.edit .btn.sm { width: 28px; height: 24px; }
.btn.sm.off { border-color: #c4c4c4; }
.btn.sm.off svg { filter: grayscale(1); opacity: .65; }
.checks { padding-top: 5px; }
.checks label { display: flex; align-items: center; gap: 5px; height: 26px; }
.checks.last { padding-top: 3px; }
input[type=checkbox] { appearance: none; width: 14px; height: 14px; border: 1px solid #b0b0b0; border-radius: 1px; background: #fff; display: grid; place-items: center; }
input[type=checkbox]:checked::after { content: ""; width: 6px; height: 10px; border: solid #111; border-width: 0 2px 2px 0; rotate: 40deg; margin-bottom: 2px; }
.fields { display: grid; gap: 4px; padding-top: 5px; }
.opac { display: grid; grid-template-columns: 82px minmax(0, 1fr); gap: 7px; align-items: center; }
input[type=range] { appearance: none; width: 82px; height: 14px; background: none; }
input[type=range]::-webkit-slider-runnable-track { height: 5px; border: 1px solid #2a7bb0; border-radius: 2px; background: #3daee9; }
input[type=range]::-webkit-slider-thumb { appearance: none; width: 13px; height: 13px; margin-top: -5px; border: 1px solid #999; border-radius: 3px; background: #fafafa; }
.sbar { width: 14px; display: flex; flex-direction: column; border-left: 1px solid #b4b4b4; }
.cap { height: 14px; display: grid; place-items: center; background: #f6f6f6; flex: none; }
.track { flex: 94; background: #e2e2e2; border: solid #bbb; border-width: 1px 0; }
.track.low { flex: 177; }
.thumb { flex: 45; background: #fafafa; }

.vsplit { align-self: center; height: 18px; background: radial-gradient(circle, #aaa 1px, transparent 1px) 0 0 / 3px 3px repeat-y; }
.views { display: flex; flex-direction: column; min-width: 0; min-height: 0; }
.ltabs { flex: none; display: flex; align-items: flex-end; height: 29px; }
.ltab { display: flex; align-items: center; }
.ltab.on { height: 28px; padding: 0 13px 0 11px; gap: 5px; background: linear-gradient(#fff, #f3f3f3); border: 1px solid #b4b4b4; border-bottom: 0; border-radius: 3px 3px 0 0; }
.ltab svg { width: 12px; height: 12px; }
.win { width: 16px; height: 16px; border: 1px solid #333; border-top-width: 5px; background: #fff; }
.plus { width: 32px; height: 26px; justify-content: center; background: #dedede; border: 1px solid #b4b4b4; border-left: 0; border-radius: 0 3px 0 0; }
.rest { flex: 1; border-bottom: 1px solid #b4b4b4; }
.pane { flex: 1; min-height: 0; display: flex; flex-direction: column; border-left: 1px solid #b4b4b4; padding-left: 1px; }
.vbar { flex: none; height: 22px; display: flex; align-items: center; padding-bottom: 2px; overflow: hidden; }
.vbar button { flex: none; width: 20px; height: 18px; display: grid; place-items: center; }
.vbar svg { width: 14px; height: 14px; }
.vbar .sep { height: 8px; }
.vbar .td { font-size: 10px; color: #333; }
.vname { margin-left: auto; padding-right: 11px; }
.vname a { color: #000; font-weight: 700; }
.vbar .split { border: 1px solid #aaa; border-radius: 3px; background: #fafafa; margin-right: 1px; }
.vbar .split:last-child { margin-right: -3px; }
.split i { width: 10px; height: 9px; border: 1px solid #112; background: linear-gradient(#112, #112) center / 1px 100% no-repeat, #eef; }
.split i.v { background-size: 100% 1px; background-color: #eef; }
.canvas { flex: 1; min-height: 0; background: #fff; border: 2px solid #0000fa; border-right: 0; overflow: hidden; }
.canvas svg { display: block; width: 100%; height: 100%; }
.line { fill: none; stroke: #1c1c1c; stroke-width: 2.6; }
.band { fill: #000; }
.slit { fill: none; stroke: #ddd; stroke-width: 1.5; }

.status { flex: none; height: 21px; display: flex; padding: 4px 0 0 576px; gap: 1px; }
.status button { width: 21px; height: 18px; border: 1px solid #bbb; border-radius: 3px; background: #f2f2f2; display: grid; place-items: center; }
.status svg { width: 10px; height: 10px; filter: grayscale(1); }
.progress { flex: 1; border: 1px solid #aaa; border-right: 0; border-bottom: 0; }
.mark { position: absolute; right: 15px; bottom: 6px; font: 19px/26px "Liberation Sans", "Noto Sans CJK SC", sans-serif; color: rgba(165, 165, 165, .8); text-shadow: 1px 1px #777, -1px -1px #fff; }
```
FILE: contours.js
```js
// Iso-lines in thirds of a pixel; "z" at the end marks a closed loop.
const lines = [
  "133,76 160,69 215,70 232,77 205,87 155,85 z",
  "115,62 90,67 92,80 120,98 175,103 240,92 270,76 262,66",
  "55,45 66,78 100,105 175,118 250,103 295,80 288,66",
  "42,40 55,75 80,112 150,135 220,125 290,98 318,78 310,66",
  "1433,45 1400,135 1386,200 1381,260 1375,340 1362,430 1342,500 1320,532 1295,540 1293,553 1250,565 1205,587 1190,598 1140,610 1105,617 1090,625 1020,640 870,670 720,688 480,705 440,710 330,720 300,718 240,728 135,747 82,763 88,773 52,791 46,765 44,705 44,540 55,380 80,295 76,280 50,250 43,160 50,138 100,156 150,167 205,154 260,123 310,97 336,78 328,66",
  "345,66 354,77 330,97 300,115 240,150 180,205 140,290 105,400 88,490 86,570 98,630 135,667 170,673 220,664 260,656 290,660 330,653 360,658 420,648 450,641 485,649 500,646 720,629 820,615 1000,583 1060,573 1080,562 1140,547 1165,533 1195,522 1205,510 1260,467 1300,410 1330,330 1345,240 1362,170 1395,110 1433,45",
  "362,66 370,76 350,97 310,122 250,165 200,222 150,310 120,410 115,490 125,555 150,585 160,599 250,596 280,600 335,590 370,594 400,591 440,592 480,583 510,589 720,575 870,560 1000,530 1120,490 1140,475 1160,468 1175,452 1205,435 1215,420 1270,360 1310,290 1325,210 1350,150 1400,95 1433,45",
  "380,65 387,76 365,101 325,130 275,175 230,225 180,300 150,380 143,430 150,485 170,512 168,520 180,530 237,541 265,533 310,530 390,535 440,535 470,531 600,528 720,521 840,507 960,475 1080,430 1170,393 1175,380 1195,375 1200,365 1220,350 1240,325 1250,300 1280,240 1300,180 1340,130 1400,87 1433,45",
  "397,65 404,76 385,103 340,140 290,190 240,250 200,320 178,385 180,425 205,467 247,479 258,472 318,464 345,470 370,466 390,471 560,475 720,470 920,446 940,438 1020,418 1100,375 1140,335 1170,315 1210,275 1240,240 1247,222 1265,190 1290,145 1340,110 1433,45",
  "415,65 424,76 405,103 360,145 310,195 260,250 225,305 214,350 222,382 240,397 247,405 285,409 300,402 330,408 345,404 390,413 400,411 600,423 720,422 820,414 960,388 1090,330 1170,270 1220,210 1240,165 1280,120 1360,92 1433,45",
  "432,65 446,76 425,103 380,145 330,195 280,250 264,290 266,325 303,352 340,349 420,355 600,374 700,377 705,379 720,376 870,360 940,338 990,328 1070,298 1090,294 1160,240 1200,190 1230,145 1265,110 1340,87 1433,45",
  "447,65 465,76 450,100 420,125 405,145 378,165 360,190 337,225 338,262 370,282 430,292 540,313 640,330 720,333 820,326 940,300 1060,250 1120,220 1170,170 1210,123 1260,100 1360,80",
  "465,65 480,76 460,102 432,128 408,142 403,160 382,178 373,210 380,240 430,258 510,278 650,308 720,313 820,308 940,280 1040,243 1120,200 1160,160 1195,115 1240,97 1360,78",
  "485,64 494,76 475,100 455,120 438,133 425,155 412,165 410,190 422,213 470,232 560,258 650,285 720,293 740,294 820,285 940,258 1060,210 1140,160 1175,112 1220,92 1340,76",
  "505,64 520,74 510,85 488,105 478,123 465,145 475,175 520,203 570,222 640,243 720,254 780,256 880,242 1000,210 1090,160 1120,120 1160,92 1240,82 1340,72",
  "540,64 556,76 535,95 518,115 513,137 540,162 600,190 660,209 720,216 820,215 920,200 1020,175 1080,135 1110,98 1170,84 1300,72",
  "585,64 597,76 570,103 567,130 590,150 650,172 720,183 780,184 870,177 970,157 1030,130 1065,98 1140,80 1240,72",
  "640,64 655,76 637,103 640,120 670,138 720,148 780,152 860,148 940,130 980,105 1010,88 1120,75",
  "660,64 720,72 760,80 780,93 790,97 850,90 1020,77 1140,70",
  "80,1005 81,945 93,875 108,853 112,838 140,817 225,796 240,790 350,774 375,774 540,758 720,745 880,727 1020,705 1060,693 1080,695 1095,686 1135,691 1150,680 1180,678 1200,662 1240,660 1280,653 1335,648 1375,617 1390,620 1398,650 1403,705 1403,825 1387,935 1355,1050 1310,1130 1250,1200 1150,1310 1010,1388 880,1421 720,1426 640,1423 520,1408 370,1357 240,1275 145,1180 95,1085 z",
  "107,1005 108,955 120,915 140,893 160,870 210,853 420,822 720,802 990,771 1035,767 1045,762 1120,750 1145,745 1160,747 1220,740 1330,742 1350,735 1360,725 1375,727 1385,765 1386,860 1365,970 1335,1060 1235,1210 1140,1305 1005,1376 870,1413 720,1421 540,1405 390,1350 265,1270 170,1175 120,1085 z",
  "132,1005 137,985 136,968 150,950 155,937 190,912 240,910 340,890 550,870 720,860 1080,817 1100,812 1140,808 1175,813 1185,805 1240,813 1330,807 1335,798 1360,798 1369,825 1368,900 1330,1050 1230,1195 1132,1295 1000,1366 865,1405 720,1415 560,1400 410,1348 290,1270 195,1180 145,1085 z",
  "158,1010 170,993 175,980 210,961 270,953 500,932 640,923 655,919 720,917 1090,881 1115,883 1160,878 1200,880 1290,876 1300,868 1320,862 1332,856 1348,860 1352,890 1345,950 1315,1050 1220,1190 1125,1287 995,1358 860,1397 720,1409 580,1397 440,1350 320,1275 220,1180 165,1085 z",
  "187,1050 190,1035 210,1012 240,1003 540,985 620,976 640,977 660,973 720,971 780,970 1080,939 1110,935 1130,937 1140,928 1170,933 1205,943 1210,939 1240,940 1270,927 1315,911 1328,920 1325,965 1300,1050 1210,1185 1120,1277 990,1350 860,1390 720,1404 600,1393 460,1350 340,1280 250,1195 200,1115 z",
  "218,1080 230,1060 245,1051 400,1046 480,1038 720,1026 780,1022 800,1024 1060,994 1120,989 1200,991 1250,977 1280,964 1298,962 1303,980 1280,1055 1200,1180 1110,1272 985,1343 850,1385 720,1398 620,1390 480,1348 380,1300 290,1225 235,1145 z",
  "256,1130 262,1113 290,1097 380,1099 505,1092 550,1085 600,1085 720,1080 755,1076 775,1079 1060,1054 1090,1058 1150,1051 1200,1035 1230,1020 1260,1016 1271,1035 1250,1085 1190,1175 1105,1263 980,1336 850,1377 720,1392 640,1385 520,1353 420,1310 330,1245 275,1180 z",
  "302,1172 308,1157 325,1145 370,1148 410,1143 450,1147 480,1141 530,1142 543,1135 555,1141 590,1136 660,1132 700,1134 810,1128 860,1128 1060,1116 1120,1105 1170,1083 1200,1072 1225,1071 1232,1085 1220,1115 1170,1185 1100,1255 980,1325 850,1369 720,1386 600,1373 480,1333 390,1280 330,1225 z",
  "358,1212 362,1202 375,1192 410,1191 470,1195 510,1194 580,1190 600,1192 720,1186 785,1183 810,1186 875,1180 910,1183 980,1175 1050,1155 1120,1130 1160,1123 1183,1135 1175,1160 1135,1205 1090,1250 980,1313 850,1360 720,1378 650,1373 550,1350 450,1305 390,1255 z",
  "428,1253 435,1242 455,1235 520,1237 550,1240 600,1237 650,1240 690,1238 720,1241 780,1244 825,1240 850,1243 900,1235 980,1218 1030,1200 1070,1191 1103,1191 1108,1203 1095,1225 1050,1265 960,1310 840,1350 720,1369 620,1360 530,1330 460,1290 z",
  "519,1292 525,1283 545,1277 590,1274 640,1279 660,1277 720,1279 780,1282 825,1279 835,1282 860,1277 880,1280 910,1274 930,1275 970,1263 990,1262 988,1270 960,1288 900,1315 820,1343 720,1357 650,1350 570,1325 530,1305 z",
  "47,1225 50,1180 56,1165 66,1169 90,1192 150,1248 230,1305 330,1360 430,1405 477,1425 450,1428 300,1428 130,1428 95,1423 70,1405 58,1365 50,1305 z",
  "933,1427 940,1413 1010,1380 1120,1335 1220,1285 1290,1235 1340,1155 1380,1070 1405,1027 1415,1025 1417,1075 1412,1165 1417,1265 1420,1315 1412,1370 1380,1405 1340,1421 1300,1427 1200,1428 1050,1428 z",
  "985,1415 1010,1402 1060,1380 1150,1353 1210,1343 1245,1347 1253,1365 1230,1393 1180,1412 1100,1422 1010,1422 z",
  "1060,1402 1090,1392 1128,1390 1132,1398 1105,1408 1065,1408 z"
];
const ns = "http://www.w3.org/2000/svg";
const group = document.getElementById("contours");

function add(cls, d) {
  const p = document.createElementNS(ns, "path");
  p.setAttribute("class", cls);
  p.setAttribute("d", d);
  group.append(p);
}

// Spline whose tangents are limited by the neighbouring chord lengths.
function spline(text) {
  const closed = text.endsWith("z");
  const p = text.replace(" z", "").split(" ").map(s => s.split(",").map(Number));
  const n = p.length;
  const at = i => closed ? p[(i + n) % n] : p[Math.max(0, Math.min(n - 1, i))];
  const dist = (a, b) => Math.hypot(a[0] - b[0], a[1] - b[1]);
  const tangent = i => {
    const a = at(i - 1), b = at(i + 1), l = dist(a, b) || 1;
    return [(b[0] - a[0]) / l, (b[1] - a[1]) / l];
  };
  let d = "M" + p[0];
  for (let i = 0; i < (closed ? n : n - 1); i++) {
    const a = at(i), b = at(i + 1), k = dist(a, b) / 3, s = tangent(i), t = tangent(i + 1);
    d += `C${a[0] + s[0] * k},${a[1] + s[1] * k} ${b[0] - t[0] * k},${b[1] - t[1] * k} ${b}`;
  }
  return d;
}

lines.forEach(l => add("line", spline(l)));
add("band", "M40 37H1433L1428 54 1390 64 1330 76 1260 78 1060 68 720 62 480 64 330 67 240 68 130 60Z");
add("band", "M1340 76 1240 92 1220 103 1300 88 1350 78Z");
add("band", "M620 1422 720 1416 820 1421 780 1427H660Z");
add("slit", "M480 62 490 60M560 62 575 59M600 64 625 58M665 64 700 60M800 62 865 58M1062 57 1140 65M1220 62 1250 72M1305 64 1325 74");
```
